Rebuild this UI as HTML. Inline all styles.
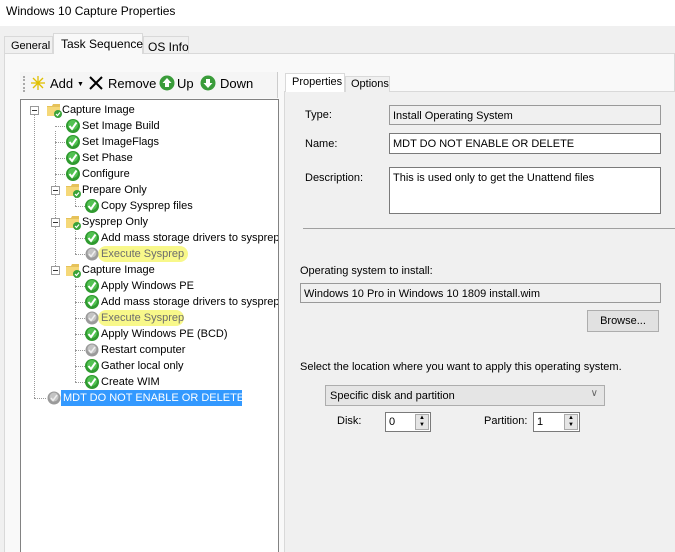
<!DOCTYPE html>
<html><head><meta charset="utf-8"><style>
*{margin:0;padding:0;box-sizing:border-box}
html,body{overflow:hidden}
body{width:675px;height:552px;background:#f0f0f0;font-family:"Liberation Sans",sans-serif;font-size:11px;color:#000;position:relative}
.a{position:absolute;white-space:nowrap}
.t{position:absolute;white-space:nowrap;line-height:16px}
.field{position:absolute;border:1px solid #7a7a7a;background:#fff;padding:3px 3px 2px;line-height:14px;overflow:hidden}
.dv{position:absolute;border-left:1px dotted #999}
.dh{position:absolute;border-top:1px dotted #999;width:12px}
.exp{position:absolute;width:9px;height:9px;border:1px solid #999;background:#fff}
.exp:after{content:"";position:absolute;left:1px;top:3px;width:5px;height:1px;background:#333}
</style></head><body>
<div class="a" style="left:0;top:0;width:675px;height:26px;background:#fff"></div>
<div class="a" style="left:6px;top:4px;font-size:12px">Windows 10 Capture Properties</div>
<div class="a" style="left:4px;top:53px;width:671px;height:499px;background:#f9f9f9;border:1px solid #d9d9d9;border-bottom:none"></div>
<div class="a" style="left:4px;top:36px;width:49px;height:18px;border:1px solid #d9d9d9;background:#f0f0f0;padding:3px 0 0 6px">General</div>
<div class="a" style="left:53px;top:33px;width:90px;height:21px;border:1px solid #d9d9d9;border-bottom:none;background:#f9f9f9;padding:3px 0 0 7px;font-size:12px">Task Sequence</div>
<div class="a" style="left:143px;top:36px;width:46px;height:18px;border:1px solid #d9d9d9;background:#f0f0f0;padding:3px 0 0 4px;font-size:12px">OS Info</div>
<div class="a" style="left:20px;top:72px;width:258px;height:26px;background:#f5f5f5;border-right:1px solid #ccc"></div>
<div class="a" style="left:23px;top:76px;height:16px;border-left:2px dotted #aaa"></div>
<svg class="a" style="left:30px;top:75px" width="16" height="16" viewBox="0 0 16 16"><g stroke="#e0c000" stroke-width="1.3"><line x1="8" y1="1" x2="8" y2="15"/><line x1="1" y1="8" x2="15" y2="8"/><line x1="3" y1="3" x2="13" y2="13"/><line x1="13" y1="3" x2="3" y2="13"/></g></svg>
<div class="a" style="left:50px;top:76px;font-size:13px">Add</div>
<div class="a" style="left:77px;top:81px;font-size:7px">▼</div>
<svg class="a" style="left:89px;top:76px" width="14" height="14"><path d="M1 1L13 13M13 1L1 13" stroke="#000" stroke-width="2"/></svg>
<div class="a" style="left:108px;top:76px;font-size:13px">Remove</div>
<svg class="a" style="left:159px;top:75px" width="16" height="16"><circle cx="8" cy="8" r="7.5" fill="#3a9c3a"/><path d="M8 3L3.5 8H6V12H10V8H12.5Z" fill="#fff"/></svg>
<div class="a" style="left:177px;top:76px;font-size:13px">Up</div>
<svg class="a" style="left:200px;top:75px" width="16" height="16"><circle cx="8" cy="8" r="7.5" fill="#3a9c3a"/><path d="M8 13L3.5 8H6V4H10V8H12.5Z" fill="#fff"/></svg>
<div class="a" style="left:220px;top:76px;font-size:13px">Down</div>
<div class="a" style="left:20px;top:99px;width:259px;height:453px;background:#fff;border:1px solid #828282;border-bottom:none;overflow:hidden">
<div style="position:absolute;left:-20px;top:-99px;width:300px;height:540px;font-size:11px">
<div class="dv" style="left:33px;top:114px;height:283px"></div>
<div class="dv" style="left:54px;top:130px;height:139px"></div>
<div class="dv" style="left:74px;top:195px;height:10px"></div>
<div class="dv" style="left:74px;top:227px;height:26px"></div>
<div class="dv" style="left:74px;top:275px;height:106px"></div>
<div class="dh" style="left:33px;top:397px"></div>
<div class="dh" style="left:54px;top:125px"></div><div class="dh" style="left:54px;top:141px"></div><div class="dh" style="left:54px;top:157px"></div><div class="dh" style="left:54px;top:173px"></div>
<div class="dh" style="left:74px;top:205px"></div><div class="dh" style="left:74px;top:237px"></div><div class="dh" style="left:74px;top:253px"></div>
<div class="dh" style="left:74px;top:285px"></div><div class="dh" style="left:74px;top:301px"></div><div class="dh" style="left:74px;top:317px"></div><div class="dh" style="left:74px;top:333px"></div><div class="dh" style="left:74px;top:349px"></div><div class="dh" style="left:74px;top:365px"></div><div class="dh" style="left:74px;top:381px"></div>
<div class="exp" style="left:29px;top:105px"></div>
<div class="exp" style="left:50px;top:185px"></div>
<div class="exp" style="left:50px;top:217px"></div>
<div class="exp" style="left:50px;top:265px"></div>
<div class="a" style="left:97px;top:245px;width:90px;height:16px;background:#f8f88a;border-radius:8px"></div>
<div class="a" style="left:97px;top:309px;width:86px;height:16px;background:#f8f88a;border-radius:8px"></div>
<div class="a" style="left:60px;top:389px;width:181px;height:16px;background:#3399ff"></div>
<svg class="a" style="left:0;top:0" width="300" height="420">
<defs>
<g id="ck"><circle cx="7" cy="7" r="7" fill="#2f9a2f"/><circle cx="7" cy="6" r="5" fill="#52c152"/><path d="M3.5 7L6 10L10.5 3.5" stroke="#fff" stroke-width="2" fill="none"/></g>
<g id="gr"><circle cx="7" cy="7" r="6.5" fill="#9a9a9a"/><circle cx="7" cy="6" r="4.5" fill="#c4c4c4"/><path d="M4 7L6 9.5L10 4" stroke="#eee" stroke-width="1.5" fill="none"/></g>
<g id="fd"><path d="M0 3H5L6 1H13V13H0Z" fill="#e6c25a"/><rect x="0" y="4" width="13" height="9" fill="#f5d878"/><circle cx="11" cy="11" r="4" fill="#3aa33a"/><path d="M9 11L10.5 12.5L13 9.5" stroke="#fff" stroke-width="1.2" fill="none"/></g>
</defs>
<use href="#fd" x="46" y="102"/>
<use href="#ck" x="65" y="118"/><use href="#ck" x="65" y="134"/><use href="#ck" x="65" y="150"/><use href="#ck" x="65" y="166"/>
<use href="#fd" x="65" y="182"/>
<use href="#ck" x="84" y="198"/>
<use href="#fd" x="65" y="214"/>
<use href="#ck" x="84" y="230"/><use href="#gr" x="84" y="246"/>
<use href="#fd" x="65" y="262"/>
<use href="#ck" x="84" y="278"/><use href="#ck" x="84" y="294"/><use href="#gr" x="84" y="310"/><use href="#ck" x="84" y="326"/><use href="#gr" x="84" y="342"/><use href="#ck" x="84" y="358"/><use href="#ck" x="84" y="374"/>
<use href="#gr" x="46" y="390"/>
</svg>
<div class="t" style="left:61px;top:101px">Capture Image</div>
<div class="t" style="left:81px;top:117px">Set Image Build</div>
<div class="t" style="left:81px;top:133px">Set ImageFlags</div>
<div class="t" style="left:81px;top:149px">Set Phase</div>
<div class="t" style="left:81px;top:165px">Configure</div>
<div class="t" style="left:81px;top:181px">Prepare Only</div>
<div class="t" style="left:100px;top:197px">Copy Sysprep files</div>
<div class="t" style="left:81px;top:213px">Sysprep Only</div>
<div class="t" style="left:100px;top:229px">Add mass storage drivers to sysprep.inf</div>
<div class="t" style="left:100px;top:245px;color:#6d6d6d">Execute Sysprep</div>
<div class="t" style="left:81px;top:261px">Capture Image</div>
<div class="t" style="left:100px;top:277px">Apply Windows PE</div>
<div class="t" style="left:100px;top:293px">Add mass storage drivers to sysprep.inf</div>
<div class="t" style="left:100px;top:309px;color:#6d6d6d">Execute Sysprep</div>
<div class="t" style="left:100px;top:325px">Apply Windows PE (BCD)</div>
<div class="t" style="left:100px;top:341px">Restart computer</div>
<div class="t" style="left:100px;top:357px">Gather local only</div>
<div class="t" style="left:100px;top:373px">Create WIM</div>
<div class="t" style="left:62px;top:389px;color:#fff">MDT DO NOT ENABLE OR DELETE</div>
</div></div>
<div class="a" style="left:284px;top:91px;width:391px;height:461px;background:#f0f0f0;border-left:1px solid #d9d9d9;border-top:1px solid #d9d9d9"></div>
<div class="a" style="left:285px;top:73px;width:60px;height:19px;background:#fff;border:1px solid #d9d9d9;border-bottom:none;padding:2px 0 0 6px">Properties</div>
<div class="a" style="left:345px;top:76px;width:45px;height:16px;background:#f0f0f0;border:1px solid #d9d9d9;border-bottom:none;padding:1px 0 0 5px">Options</div>
<div class="a" style="left:305px;top:109px">Type:</div>
<div class="field" style="left:389px;top:105px;width:272px;height:20px;background:#f0f0f0;border-color:#999">Install Operating System</div>
<div class="a" style="left:305px;top:138px">Name:</div>
<div class="field" style="left:389px;top:133px;width:272px;height:21px">MDT DO NOT ENABLE OR DELETE</div>
<div class="a" style="left:305px;top:172px">Description:</div>
<div class="field" style="left:389px;top:167px;width:272px;height:47px">This is used only to get the Unattend files</div>
<div class="a" style="left:303px;top:228px;width:372px;height:1px;background:#a0a0a0"></div>
<div class="a" style="left:300px;top:265px">Operating system to install:</div>
<div class="field" style="left:300px;top:283px;width:361px;height:20px;background:#f0f0f0;border-color:#999">Windows 10 Pro in Windows 10 1809 install.wim</div>
<div class="a" style="left:587px;top:310px;width:72px;height:22px;background:#e1e1e1;border:1px solid #adadad;text-align:center;line-height:20px">Browse...</div>
<div class="a" style="left:300px;top:361px">Select the location where you want to apply this operating system.</div>
<div class="a" style="left:325px;top:385px;width:280px;height:21px;background:#e5e5e5;border:1px solid #adadad;padding:3px 4px;line-height:14px">Specific disk and partition<span style="position:absolute;right:6px;top:1px;color:#666;font-size:10px">&#8744;</span></div>
<div class="a" style="left:337px;top:415px">Disk:</div>
<div class="field" style="left:385px;top:412px;width:46px;height:20px;padding:2px 3px">0</div>
<div class="a" style="left:415px;top:414px;width:14px;height:16px;background:#e5e5e5;border:1px solid #aaa;font-size:6px;line-height:7px;text-align:center">▲<br>▼</div>
<div class="a" style="left:484px;top:415px">Partition:</div>
<div class="field" style="left:533px;top:412px;width:47px;height:20px;padding:2px 3px">1</div>
<div class="a" style="left:564px;top:414px;width:14px;height:16px;background:#e5e5e5;border:1px solid #aaa;font-size:6px;line-height:7px;text-align:center">▲<br>▼</div>
</body></html>
